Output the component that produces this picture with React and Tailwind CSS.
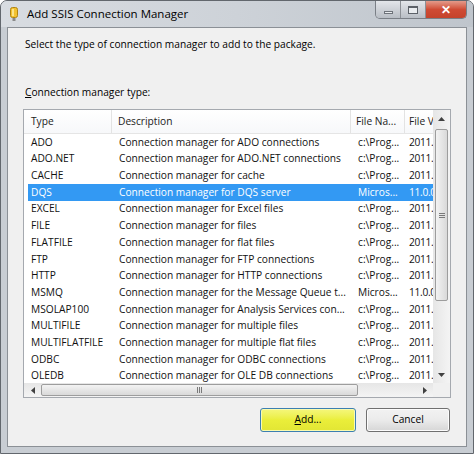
import React from 'react'

const rows = [
  ['ADO', 'Connection manager for ADO connections', 'c:\\Prog...', '2011.'],
  ['ADO.NET', 'Connection manager for ADO.NET connections', 'c:\\Prog...', '2011.'],
  ['CACHE', 'Connection manager for cache', 'c:\\Prog...', '2011.'],
  ['DQS', 'Connection manager for DQS server', 'Micros...', '11.0.0'],
  ['EXCEL', 'Connection manager for Excel files', 'c:\\Prog...', '2011.'],
  ['FILE', 'Connection manager for files', 'c:\\Prog...', '2011.'],
  ['FLATFILE', 'Connection manager for flat files', 'c:\\Prog...', '2011.'],
  ['FTP', 'Connection manager for FTP connections', 'c:\\Prog...', '2011.'],
  ['HTTP', 'Connection manager for HTTP connections', 'c:\\Prog...', '2011.'],
  ['MSMQ', 'Connection manager for the Message Queue t...', 'Micros...', '11.0.0'],
  ['MSOLAP100', 'Connection manager for Analysis Services con...', 'c:\\Prog...', '2011.'],
  ['MULTIFILE', 'Connection manager for multiple files', 'c:\\Prog...', '2011.'],
  ['MULTIFLATFILE', 'Connection manager for multiple flat files', 'c:\\Prog...', '2011.'],
  ['ODBC', 'Connection manager for ODBC connections', 'c:\\Prog...', '2011.'],
  ['OLEDB', 'Connection manager for OLE DB connections', 'c:\\Prog...', '2011.']
]

const selected = 'DQS'

const Row = ({ r }) => {
  const sel = r[0] === selected
  return (
    <div
      className={`flex h-[16.7px] items-center whitespace-nowrap ml-[4px] ${
        sel ? 'bg-[#3399f3] text-white' : 'text-[#111]'
      }`}
    >
      <div className="w-[85px] shrink-0 pl-[3px]">{r[0]}</div>
      <div className="w-[239px] shrink-0 pl-[6px] overflow-hidden">{r[1]}</div>
      <div className="w-[54px] shrink-0 pl-[6px] overflow-hidden">{r[2]}</div>
      <div className="w-[29px] shrink-0 pl-[3px] tracking-[-0.3px] overflow-hidden">{r[3]}</div>
    </div>
  )
}

const Arrow = ({ dir }) => {
  const pts = {
    up: '0,4 3.5,0 7,4',
    down: '0,0 3.5,4 7,0',
    left: '4,0 0,3.5 4,7',
    right: '0,0 4,3.5 0,7'
  }[dir]
  const horiz = dir === 'left' || dir === 'right'
  return (
    <svg width={horiz ? 4 : 7} height={horiz ? 7 : 4} viewBox={horiz ? '0 0 4 7' : '0 0 7 4'}>
      <polygon points={pts} fill="#404040" />
    </svg>
  )
}

export default function App() {
  return (
    <div
      className="w-[474px] h-[454px] flex flex-col bg-[#c8cdd3] border border-[#62676d] rounded-t-[7px] overflow-hidden text-[10.2px]"
      style={{ fontFamily: '"Open Sans", "Noto Sans", sans-serif' }}
    >
      {/* Title bar */}
      <div className="h-[26px] shrink-0 flex items-start bg-linear-to-r from-[#d8dce1] via-[#cdd2d8] to-[#bfc5cc]">
        <div className="flex items-center h-[26px] pl-[8px] gap-[8px]">
          <svg width="10" height="15" viewBox="0 0 10 15">
            <rect x="1.5" y="0.5" width="7" height="10" rx="2" fill="#f2c230" stroke="#b08414" />
            <rect x="3" y="2" width="2" height="7" fill="#fbe48a" />
            <rect x="3.5" y="11" width="3" height="3" fill="#8a8a8a" />
          </svg>
          <span className="text-[11.5px] text-black">Add SSIS Connection Manager</span>
        </div>
        <div className="ml-auto mr-[6px] flex h-[18px] rounded-b-[5px] overflow-hidden border border-t-0 border-[#7a7f86]">
          <div className="w-[25px] flex items-center justify-center bg-linear-to-b from-[#e3e6ea] to-[#b9bec5] border-r border-[#8c9096]">
            <div className="w-[9px] h-[3px] bg-[#e9ecef] border border-[#6e737a] mt-[6px]" />
          </div>
          <div className="w-[25px] flex items-center justify-center bg-linear-to-b from-[#e3e6ea] to-[#b9bec5] border-r border-[#8c9096]">
            <div className="w-[10px] h-[8px] border border-[#5c6168] border-t-[2px] bg-[#e9ecef]" />
          </div>
          <div className="w-[40px] flex items-center justify-center bg-linear-to-b from-[#e39a8a] via-[#cf4b34] to-[#c5432b]">
            <span className="text-white font-bold text-[12px] leading-none">✕</span>
          </div>
        </div>
      </div>

      {/* Client area */}
      <div className="flex-1 mx-[6px] mb-[6px] bg-[#f0f0f0] border border-[#8b9096] flex flex-col px-[15px]">
        <div className="mt-[9px] ml-[2px] h-[15px] leading-[15px] text-black">
          Select the type of connection manager to add to the package.
        </div>
        <div className="mt-[33px] ml-[2px] h-[15px] leading-[15px] text-black">
          <span className="underline">C</span>onnection manager type:
        </div>

        {/* List */}
        <div className="mt-[9px] h-[289px] bg-white border border-[#a5a9af] flex flex-col">
          <div className="flex flex-1 min-h-0">
            <div className="flex-1 min-w-0 overflow-hidden flex flex-col">
              <div className="h-[24px] shrink-0 flex items-center whitespace-nowrap text-[#222] bg-linear-to-b from-white to-[#f7f8fa] border-b border-[#e5e5e5]">
                <div className="w-[88px] shrink-0 pl-[7px] h-full flex items-center border-r border-[#e3e3e3]">Type</div>
                <div className="w-[239px] shrink-0 pl-[6px] h-full flex items-center border-r border-[#e3e3e3]">Description</div>
                <div className="w-[54px] shrink-0 pl-[5px] h-full flex items-center border-r border-[#e3e3e3]">File Na...</div>
                <div className="w-[29px] shrink-0 pl-[4px] h-full flex items-center overflow-hidden">File V</div>
              </div>
              <div className="flex-1 min-h-0 overflow-hidden">
                {rows.map((r) => (
                  <Row key={r[0]} r={r} />
                ))}
              </div>
            </div>
            {/* Vertical scrollbar */}
            <div className="w-[17px] shrink-0 flex flex-col bg-linear-to-r from-[#e6e6e6] to-[#f4f4f4]">
              <div className="h-[17px] flex items-center justify-center">
                <Arrow dir="up" />
              </div>
              <div className="flex-1 px-[2px] pt-[2px]">
                <div className="h-[172px] rounded-[2px] border border-[#9d9d9d] bg-linear-to-r from-[#f3f3f3] to-[#d9d9d9] flex flex-col items-center justify-center gap-[1px]">
                  <div className="w-[6px] h-[1px] bg-[#7a7a7a]" />
                  <div className="w-[6px] h-[1px] bg-[#7a7a7a]" />
                  <div className="w-[6px] h-[1px] bg-[#7a7a7a]" />
                </div>
              </div>
              <div className="h-[17px] flex items-center justify-center">
                <Arrow dir="down" />
              </div>
            </div>
          </div>
          {/* Horizontal scrollbar */}
          <div className="h-[14px] shrink-0 flex">
            <div className="flex-1 flex bg-linear-to-b from-[#e6e6e6] to-[#f4f4f4]">
              <div className="w-[17px] flex items-center justify-center">
                <Arrow dir="left" />
              </div>
              <div className="flex-1 py-[1px]">
                <div className="w-[317px] h-full rounded-[2px] border border-[#9d9d9d] bg-linear-to-b from-[#f3f3f3] to-[#d9d9d9] flex items-center justify-center gap-[1px]">
                  <div className="w-[1px] h-[6px] bg-[#7a7a7a]" />
                  <div className="w-[1px] h-[6px] bg-[#7a7a7a]" />
                  <div className="w-[1px] h-[6px] bg-[#7a7a7a]" />
                </div>
              </div>
              <div className="w-[17px] flex items-center justify-center">
                <Arrow dir="right" />
              </div>
            </div>
            <div className="w-[17px] bg-[#f0f0f0]" />
          </div>
        </div>

        {/* Buttons */}
        <div className="mt-[10px] flex justify-end gap-[10px] mr-[1px]">
          <button className="w-[96px] h-[24px] rounded-[3px] border border-[#3c7fb1] bg-linear-to-b from-[#f5f77a] via-[#eaee3a] to-[#e2e634] text-black shadow-[inset_0_0_0_1px_#f9fbb0]">
            <span className="underline">A</span>dd...
          </button>
          <button className="w-[84px] h-[24px] rounded-[3px] border border-[#707070] bg-linear-to-b from-[#f2f2f2] via-[#ebebeb] to-[#d6d6d6] text-black shadow-[inset_0_0_0_1px_#fcfcfc]">
            Cancel
          </button>
        </div>
      </div>
    </div>
  )
}
